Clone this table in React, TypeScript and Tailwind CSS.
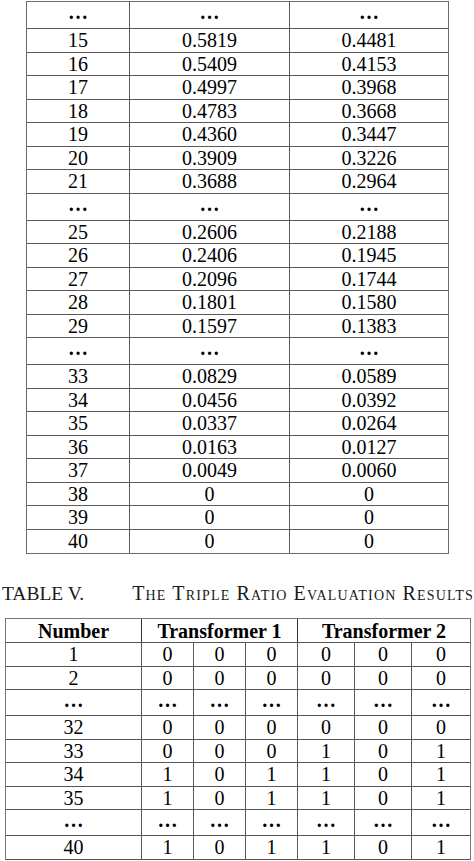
const topRows: [string, string, string][] = [
  ["…", "…", "…"],
  ["15", "0.5819", "0.4481"],
  ["16", "0.5409", "0.4153"],
  ["17", "0.4997", "0.3968"],
  ["18", "0.4783", "0.3668"],
  ["19", "0.4360", "0.3447"],
  ["20", "0.3909", "0.3226"],
  ["21", "0.3688", "0.2964"],
  ["…", "…", "…"],
  ["25", "0.2606", "0.2188"],
  ["26", "0.2406", "0.1945"],
  ["27", "0.2096", "0.1744"],
  ["28", "0.1801", "0.1580"],
  ["29", "0.1597", "0.1383"],
  ["…", "…", "…"],
  ["33", "0.0829", "0.0589"],
  ["34", "0.0456", "0.0392"],
  ["35", "0.0337", "0.0264"],
  ["36", "0.0163", "0.0127"],
  ["37", "0.0049", "0.0060"],
  ["38", "0", "0"],
  ["39", "0", "0"],
  ["40", "0", "0"],
];

const bottomRows: string[][] = [
  ["1", "0", "0", "0", "0", "0", "0"],
  ["2", "0", "0", "0", "0", "0", "0"],
  ["…", "…", "…", "…", "…", "…", "…"],
  ["32", "0", "0", "0", "0", "0", "0"],
  ["33", "0", "0", "0", "1", "0", "1"],
  ["34", "1", "0", "1", "1", "0", "1"],
  ["35", "1", "0", "1", "1", "0", "1"],
  ["…", "…", "…", "…", "…", "…", "…"],
  ["40", "1", "0", "1", "1", "0", "1"],
];

const Cell = ({ value, last }: { value: string; last?: boolean }) => {
  const dots = value === "…";
  return (
    <div
      className={`flex items-center justify-center ${last ? "" : "border-r border-[#5a5a5a]"} ${
        dots ? "pb-[12px] font-bold" : ""
      }`}
    >
      {value}
    </div>
  );
};

export default function App() {
  return (
    <div className="bg-white text-black font-['Liberation_Serif',serif] text-[20px] leading-none pt-[1px] h-[861px] overflow-hidden">
      {/* Table IV continuation */}
      <div className="ml-[26px] w-[423px] border border-[#6b6b6b]">
        {topRows.map((row, i) => (
          <div
            key={i}
            className={`grid grid-cols-[103px_160px_158px] ${
              i < topRows.length - 1 ? "border-b border-[#5a5a5a]" : ""
            } ${row[0] === "…" ? "h-[27px]" : "h-[23.5px]"}`}
          >
            <Cell value={row[0]} />
            <Cell value={row[1]} />
            <Cell value={row[2]} last />
          </div>
        ))}
      </div>

      {/* Caption */}
      <div className="mt-[30px] flex items-baseline leading-[19px] text-[#1a1a1a]">
        <span className="ml-[2px] w-[133px] text-[19.5px]">TABLE V.</span>
        <span className="[font-variant:small-caps] whitespace-nowrap text-[20px] tracking-[1.15px]">
          The Triple Ratio Evaluation Results
        </span>
      </div>

      {/* Table V */}
      <div className="mt-[15px] ml-[5px] w-[466px] border border-b-0 border-[#777]">
        <div className="grid grid-cols-[136px_156px_172px] h-[24px] border-b border-[#555] font-bold">
          <div className="flex items-center justify-center border-r border-[#333]">Number</div>
          <div className="flex items-center justify-center border-r border-[#333]">Transformer 1</div>
          <div className="flex items-center justify-center">Transformer 2</div>
        </div>
        {bottomRows.map((row, i) => (
          <div
            key={i}
            className={`grid grid-cols-[136px_52px_52px_52px_57px_57px_58px] border-b border-[#555] ${
              row[0] === "…" ? "h-[26px]" : "h-[23.5px]"
            }`}
          >
            {row.map((v, j) => (
              <Cell key={j} value={v} last={j === row.length - 1} />
            ))}
          </div>
        ))}
      </div>
    </div>
  );
}
